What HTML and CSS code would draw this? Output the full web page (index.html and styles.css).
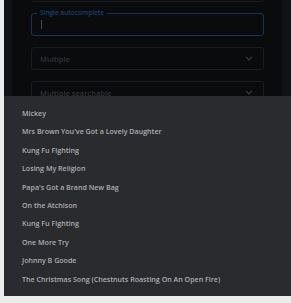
FILE: index.html
```html
<!DOCTYPE html>
<html>
<head>
<meta charset="utf-8">
<link rel="stylesheet" href="styles.css">
</head>
<body>
<div class="page">
  <div class="column">
    <div class="field top-field"></div>
    <div class="field focused">
      <span class="label">Single autocomplete</span>
      <span class="caret"></span>
    </div>
    <div class="field">
      <span class="placeholder">Multiple</span>
      <svg class="chev" width="8" height="5" viewBox="0 0 8 5"><path d="M1 1 L4 4 L7 1" fill="none" stroke="#3a3c42" stroke-width="1.2"/></svg>
    </div>
    <div class="field">
      <span class="placeholder">Multiple searchable</span>
      <svg class="chev" width="8" height="5" viewBox="0 0 8 5"><path d="M1 1 L4 4 L7 1" fill="none" stroke="#3a3c42" stroke-width="1.2"/></svg>
    </div>
  </div>
</div>
<ul class="menu">
  <li>Mickey</li>
  <li>Mrs Brown You've Got a Lovely Daughter</li>
  <li>Kung Fu Fighting</li>
  <li>Losing My Religion</li>
  <li>Papa's Got a Brand New Bag</li>
  <li>On the Atchison</li>
  <li>Kung Fu Fighting</li>
  <li>One More Try</li>
  <li>Johnny B Goode</li>
  <li>The Christmas Song (Chestnuts Roasting On An Open Fire)</li>
</ul>
</body>
</html>
```
FILE: styles.css
```css
html, body {
  margin: 0;
  padding: 0;
}
body {
  background: #ececec;
  width: 291px;
  height: 303px;
  overflow: hidden;
  position: relative;
  font-family: "Open Sans", "Noto Sans", sans-serif;
}
.page {
  margin-left: 4px;
  background: #111215;
  height: 296px;
  padding: 0 9px 0 8px;
}
.column {
  background: #0a0b0d;
  height: 100%;
  padding: 0 18px 0 19px;
  display: flex;
  flex-direction: column;
  gap: 11px;
}
.field {
  position: relative;
  height: 23px;
  border: 1px solid #1a1c20;
  border-radius: 3px;
  display: flex;
  align-items: center;
  padding: 0 8px;
  box-sizing: border-box;
}
.top-field {
  margin-top: -21px;
}
.focused {
  border-color: #15345a;
}
.label {
  position: absolute;
  top: -5px;
  left: 5px;
  padding: 0 3px;
  background: #0a0b0d;
  color: #17406e;
  font-size: 6.5px;
  line-height: 8px;
  font-weight: 600;
}
.caret {
  width: 1px;
  height: 9px;
  background: #4a4a4a;
  margin-left: 1px;
}
.placeholder {
  color: #303237;
  font-size: 7.5px;
  font-weight: 600;
  flex: 1;
}
.chev {
  margin-right: 2px;
}
.menu {
  position: absolute;
  top: 96px;
  left: 4px;
  right: 0;
  height: 200px;
  margin: 0;
  padding: 8px 0;
  box-sizing: border-box;
  list-style: none;
  background: #2a2b2f;
}
.menu li {
  height: 18.4px;
  line-height: 18.4px;
  padding-left: 18px;
  color: #acadb0;
  font-size: 7.1px;
  font-weight: 600;
  white-space: nowrap;
}
```
